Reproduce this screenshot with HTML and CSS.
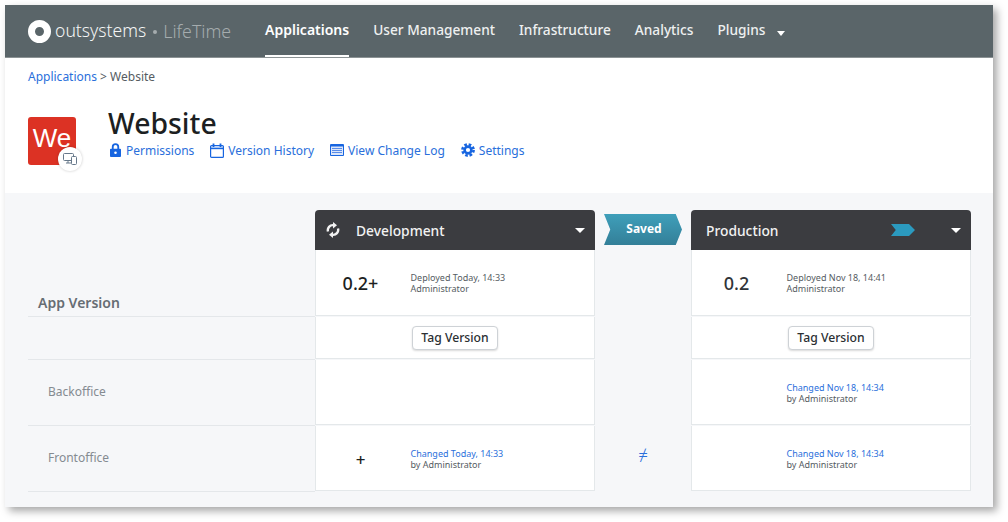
FILE: index.html

```html
<!DOCTYPE html>
<html lang="en">

<head>
    <meta charset="UTF-8">
    <meta name="viewport" content="width=device-width, initial-scale=1.0">
    <title>Website - LifeTime</title>
    <link rel="stylesheet" href="styles.css">
</head>

<body>
    <div class="window">
        <header class="topbar">
            <div class="logo">
                <span class="logo-mark"></span>
                <span class="logo-name">outsystems</span>
                <span class="logo-dot"></span>
                <span class="logo-product">LifeTime</span>
            </div>
            <nav class="nav">
                <a class="nav-item active">Applications</a>
                <a class="nav-item">User Management</a>
                <a class="nav-item">Infrastructure</a>
                <a class="nav-item">Analytics</a>
                <a class="nav-item">Plugins<span class="caret nav-caret"></span></a>
            </nav>
        </header>

        <section class="summary">
            <div class="breadcrumb"><a>Applications</a> &gt; Website</div>
            <div class="app-head">
                <div class="app-icon">We
                    <span class="device-badge">
                        <svg width="14" height="12" viewBox="0 0 14 12" fill="none" stroke="#66788a" stroke-width="1">
                            <path d="M8 7.5H1.5a1 1 0 0 1-1-1V1.5a1 1 0 0 1 1-1h8a1 1 0 0 1 1 1V3" />
                            <path d="M3 10h5M5 8v2" />
                            <rect x="8.5" y="3.5" width="5" height="8" rx="1" />
                        </svg>
                    </span>
                </div>
                <div class="app-info">
                    <h1 class="app-title">Website</h1>
                    <div class="app-links">
                        <a class="app-link">
                            <svg class="lock-icon" width="11" height="14" viewBox="0 0 12 15">
                                <path fill="#1765e0" d="M2 6V4a4 4 0 0 1 8 0v2h1a1 1 0 0 1 1 1v7a1 1 0 0 1-1 1H1a1 1 0 0 1-1-1V7a1 1 0 0 1 1-1zm2 0h4V4a2 2 0 0 0-4 0z" />
                                <circle cx="6" cy="10.5" r="1.4" fill="#fff" />
                            </svg>
                            Permissions
                        </a>
                        <a class="app-link">
                            <svg width="14" height="15" viewBox="0 0 14 15" fill="none" stroke="#1765e0" stroke-width="1.2">
                                <rect x="0.6" y="2.6" width="12.8" height="11.8" rx="1" />
                                <path d="M0.6 5.4h12.8" stroke-width="1.6" />
                                <path d="M3.5 0.5v3.4M10.5 0.5v3.4" stroke-width="1.8" />
                            </svg>
                            Version History
                        </a>
                        <a class="app-link">
                            <svg width="14" height="12" viewBox="0 0 14 12">
                                <rect width="14" height="12" rx="1" fill="#1765e0" />
                                <rect x="1" y="2.5" width="12" height="8.5" fill="#dbe6fa" />
                                <path d="M2 4.5h10M2 6.5h10M2 8.5h10" stroke="#5a8ce8" stroke-width="1" />
                            </svg>
                            View Change Log
                        </a>
                        <a class="app-link">
                            <svg width="14" height="14" viewBox="0 0 14 14" fill="none" stroke="#1765e0">
                                <circle cx="7" cy="7" r="3.4" stroke-width="2.6" />
                                <circle cx="7" cy="7" r="5.6" stroke-width="2.6" stroke-dasharray="2.6 1.8" />
                            </svg>
                            Settings
                        </a>
                    </div>
                </div>
            </div>
        </section>

        <section class="board">
            <div class="row-label"></div>
            <div class="env-head">
                <svg class="sync-icon" width="14" height="16" viewBox="0 0 14 16" fill="none" stroke="#f2f2f2" stroke-width="2.4">
                    <path d="M2 9.5A5 5 0 0 1 7.5 3.2" />
                    <path d="M12 6.5A5 5 0 0 1 6.5 12.8" />
                    <path d="M7 0l4 3.2L7 6.4z" fill="#f2f2f2" stroke="none" />
                    <path d="M7 9.6L3 12.8 7 16z" fill="#f2f2f2" stroke="none" />
                </svg>
                <span class="env-name">Development</span>
                <span class="caret env-caret"></span>
            </div>
            <div class="status-col"><span class="saved-tag">Saved</span></div>
            <div class="env-head prod">
                <span class="env-name">Production</span>
                <span class="mini-chevron"></span>
                <span class="caret env-caret"></span>
            </div>

            <div class="row-label version-label">App Version</div>
            <div class="cell">
                <div class="version">0.2+</div>
                <div class="meta">Deployed Today, 14:33<br>Administrator</div>
            </div>
            <div class="status-col"></div>
            <div class="cell">
                <div class="version light">0.2</div>
                <div class="meta">Deployed Nov 18, 14:41<br>Administrator</div>
            </div>

            <div class="row-label"></div>
            <div class="cell center"><button class="tag-btn">Tag Version</button></div>
            <div class="status-col"></div>
            <div class="cell center"><button class="tag-btn">Tag Version</button></div>

            <div class="row-label module">Backoffice</div>
            <div class="cell"></div>
            <div class="status-col"></div>
            <div class="cell">
                <div class="version"></div>
                <div class="meta"><a>Changed Nov 18, 14:34</a><br>by Administrator</div>
            </div>

            <div class="row-label module">Frontoffice</div>
            <div class="cell">
                <div class="version plus">+</div>
                <div class="meta"><a>Changed Today, 14:33</a><br>by Administrator</div>
            </div>
            <div class="status-col diff">≠</div>
            <div class="cell">
                <div class="version"></div>
                <div class="meta"><a>Changed Nov 18, 14:34</a><br>by Administrator</div>
            </div>
        </section>
    </div>
</body>

</html>
```

FILE: styles.css

```css
* {
    box-sizing: border-box;
}

body {
    margin: 0;
    padding: 5px;
    width: 1008px;
    height: 522px;
    overflow: hidden;
    background: #fff;
    font-family: "Noto Sans", "Open Sans", sans-serif;
}

.window {
    width: 988px;
    height: 502px;
    background: #f6f7f9;
    box-shadow: 4px 4px 8px rgba(0, 0, 0, 0.35);
}

/* top bar */
.topbar {
    height: 53px;
    display: flex;
    background: #5a6569;
    border-bottom: 1px solid #8b9294;
    padding-left: 23px;
}

.logo {
    display: flex;
    align-items: center;
    width: 237px;
    height: 52px;
}

.logo-mark {
    width: 23px;
    height: 23px;
    border-radius: 50%;
    border: 7.5px solid #fff;
    margin-right: 4px;
}

.logo-name {
    margin-top: -2px;
    font-size: 17.6px;
    font-weight: 300;
    color: #f4f5f5;
}

.logo-dot {
    width: 4px;
    height: 4px;
    border-radius: 50%;
    background: #a5acae;
    margin: 2px 6px 0 7px;
}

.logo-product {
    margin-top: -1px;
    font-size: 17.8px;
    font-weight: 300;
    color: #a5acae;
}

.nav {
    display: flex;
    gap: 24px;
}

.nav-item {
    height: 52px;
    line-height: 49px;
    font-size: 13.7px;
    font-weight: 500;
    color: #eef0f0;
}

.nav-item.active {
    font-size: 14px;
    font-weight: 600;
    color: #fff;
    border-bottom: 2px solid #fff;
}

.caret {
    display: inline-block;
    width: 0;
    height: 0;
    border-left: 4.5px solid transparent;
    border-right: 4.5px solid transparent;
    border-top: 5px solid #fff;
}

.nav-caret {
    margin-left: 12px;
    vertical-align: -1px;
}

/* app summary */
.summary {
    height: 135px;
    background: #fff;
    padding: 10px 23px 0;
}

.breadcrumb {
    font-size: 12px;
    line-height: 17px;
    color: #555c62;
}

.breadcrumb a,
.meta a {
    color: #2a6fdb;
}

.app-head {
    display: flex;
    margin-top: 31px;
}

.app-icon {
    position: relative;
    width: 48px;
    height: 48px;
    margin-top: 1px;
    background: #dc3224;
    border-radius: 3px;
    color: #fff;
    font-family: "Liberation Sans", sans-serif;
    font-size: 26px;
    line-height: 43px;
    text-align: center;
}

.device-badge {
    position: absolute;
    left: 30px;
    top: 30px;
    width: 24px;
    height: 24px;
    border-radius: 50%;
    background: #fff;
    box-shadow: 0 0 3px rgba(0, 0, 0, 0.22);
    display: flex;
    align-items: center;
    justify-content: center;
}

.app-info {
    margin-left: 32px;
    margin-top: -11px;
}

.app-title {
    margin: 0;
    font-size: 28.4px;
    font-weight: 500;
    line-height: 36px;
    color: #1c1f22;
}

.app-links {
    display: flex;
    gap: 16px;
    margin-top: 1px;
}

.app-link {
    display: flex;
    align-items: center;
    gap: 4px;
    font-size: 12px;
    line-height: 18px;
    color: #2a6fdb;
}

.app-link svg {
    margin-top: -2px;
}

.app-link .lock-icon {
    margin-left: 2px;
    margin-right: 1px;
}

/* environments table */
.board {
    display: grid;
    grid-template-columns: 287px 280px 96px 280px;
    grid-template-rows: 40px 67px 43px 66px 66px;
    padding: 17px 0 0 23px;
}

.row-label {
    border-bottom: 1px solid #e4e7ea;
}

.row-label:first-child {
    border-bottom: 0;
}

.version-label {
    display: flex;
    align-items: flex-end;
    padding: 0 0 4px 10px;
    font-size: 14px;
    font-weight: 600;
    color: #666d73;
}

.module {
    display: flex;
    align-items: center;
    padding: 0 0 2px 20px;
    font-size: 12px;
    color: #858b91;
}

.env-head {
    display: flex;
    align-items: center;
    background: #3b3c40;
    border-radius: 4px 4px 0 0;
    padding: 0 10px 0 11px;
    color: #f2f2f2;
    font-size: 13.8px;
    font-weight: 500;
}

.env-head.prod {
    padding-left: 15px;
}

.sync-icon {
    margin-right: 16px;
}

.env-name {
    flex: 1;
}

.env-caret {
    border-left-width: 5px;
    border-right-width: 5px;
}

.mini-chevron {
    width: 24px;
    height: 12px;
    margin-right: 36px;
    background: #2b9abf;
    clip-path: polygon(0 0, 75% 0, 100% 50%, 75% 100%, 0 100%, 20% 50%);
}

.status-col {
    padding: 4px 0 0 9px;
}

.saved-tag {
    display: block;
    width: 78px;
    height: 31px;
    padding-left: 2px;
    background: linear-gradient(#3f9fba, #337f98);
    clip-path: polygon(0 0, 92% 0, 100% 50%, 92% 100%, 0 100%, 8% 50%);
    color: #fff;
    font-size: 12px;
    font-weight: 700;
    line-height: 29px;
    text-align: center;
}

.diff {
    padding: 17px 0 0;
    font-size: 17px;
    font-weight: 300;
    line-height: 24px;
    color: #2a6fdb;
    text-align: center;
}

.cell {
    display: flex;
    align-items: center;
    background: #fff;
    border: 1px solid #e4e8ea;
    border-width: 0 1px 1px;
    margin-bottom: 1px;
}

.cell.center {
    justify-content: center;
}

.version {
    flex: 0 0 89px;
    text-align: center;
    font-size: 18px;
    font-weight: 500;
    color: #1c1f22;
}

.version.light {
    color: #303438;
}

.version.plus {
    font-size: 17px;
    padding-top: 2px;
}

.meta {
    margin-left: 5.5px;
    padding-top: 1px;
    font-size: 9px;
    line-height: 11px;
    color: #555c62;
}

.tag-btn {
    width: 86px;
    height: 24px;
    padding: 0;
    background: #fff;
    border: 1px solid #ced2d6;
    border-radius: 4px;
    box-shadow: 0 1px 2px rgba(0, 0, 0, 0.15);
    font-family: inherit;
    font-size: 12.2px;
    font-weight: 500;
    color: #2b2f33;
}
```
